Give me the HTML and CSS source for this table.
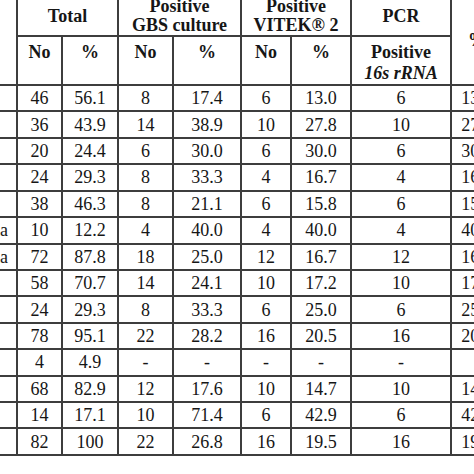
FILE: index.html
```html
<!DOCTYPE html>
<html>
<head>
<meta charset="utf-8">
<link rel="stylesheet" href="styles.css">
</head>
<body>
<table class="tbl">
  <colgroup>
    <col class="c-label">
    <col class="c-tno">
    <col class="c-tpct">
    <col class="c-gno">
    <col class="c-gpct">
    <col class="c-vno">
    <col class="c-vpct">
    <col class="c-pcr">
    <col class="c-ppct">
  </colgroup>
  <thead>
    <tr class="h1">
      <th rowspan="2" class="lab">Variables</th>
      <th colspan="2">Total</th>
      <th colspan="2">Positive<br>GBS culture</th>
      <th colspan="2">Positive<br>VITEK® 2</th>
      <th>PCR</th>
      <th rowspan="2" class="mid">%</th>
    </tr>
    <tr class="h2">
      <th>No</th>
      <th>%</th>
      <th>No</th>
      <th>%</th>
      <th>No</th>
      <th>%</th>
      <th>Positive<br><i>16s rRNA</i></th>
    </tr>
  </thead>
  <tbody>
    <tr><td class="lab">Urban</td><td>46</td><td>56.1</td><td>8</td><td>17.4</td><td>6</td><td>13.0</td><td>6</td><td>13.0</td></tr>
    <tr><td class="lab">Rural</td><td>36</td><td>43.9</td><td>14</td><td>38.9</td><td>10</td><td>27.8</td><td>10</td><td>27.8</td></tr>
    <tr><td class="lab">&lt; 25 y</td><td>20</td><td>24.4</td><td>6</td><td>30.0</td><td>6</td><td>30.0</td><td>6</td><td>30.0</td></tr>
    <tr><td class="lab">25–30 y</td><td>24</td><td>29.3</td><td>8</td><td>33.3</td><td>4</td><td>16.7</td><td>4</td><td>16.7</td></tr>
    <tr><td class="lab">&gt; 30 y</td><td>38</td><td>46.3</td><td>8</td><td>21.1</td><td>6</td><td>15.8</td><td>6</td><td>15.8</td></tr>
    <tr><td class="lab">Primigravida</td><td>10</td><td>12.2</td><td>4</td><td>40.0</td><td>4</td><td>40.0</td><td>4</td><td>40.0</td></tr>
    <tr><td class="lab">Multigravida</td><td>72</td><td>87.8</td><td>18</td><td>25.0</td><td>12</td><td>16.7</td><td>12</td><td>16.7</td></tr>
    <tr><td class="lab">Yes</td><td>58</td><td>70.7</td><td>14</td><td>24.1</td><td>10</td><td>17.2</td><td>10</td><td>17.2</td></tr>
    <tr><td class="lab">No</td><td>24</td><td>29.3</td><td>8</td><td>33.3</td><td>6</td><td>25.0</td><td>6</td><td>25.0</td></tr>
    <tr><td class="lab">Yes</td><td>78</td><td>95.1</td><td>22</td><td>28.2</td><td>16</td><td>20.5</td><td>16</td><td>20.5</td></tr>
    <tr><td class="lab">No</td><td>4</td><td>4.9</td><td>-</td><td>-</td><td>-</td><td>-</td><td>-</td><td>-</td></tr>
    <tr><td class="lab">Yes</td><td>68</td><td>82.9</td><td>12</td><td>17.6</td><td>10</td><td>14.7</td><td>10</td><td>14.7</td></tr>
    <tr><td class="lab">No</td><td>14</td><td>17.1</td><td>10</td><td>71.4</td><td>6</td><td>42.9</td><td>6</td><td>42.9</td></tr>
    <tr><td class="lab">Total</td><td>82</td><td>100</td><td>22</td><td>26.8</td><td>16</td><td>19.5</td><td>16</td><td>19.5</td></tr>
  </tbody>
</table>
</body>
</html>
```

FILE: styles.css
```css
html, body {
  margin: 0;
  padding: 0;
  background: #ffffff;
  overflow: hidden;
  width: 474px;
  height: 474px;
}

.tbl {
  border-collapse: collapse;
  table-layout: fixed;
  width: 595px;
  margin-left: -93px;
  margin-top: -5px;
  font-family: "Liberation Serif", serif;
  font-size: 18px;
  color: #161616;
}

.c-label { width: 109px; }
.c-tno { width: 45px; }
.c-tpct { width: 56px; }
.c-gno { width: 55px; }
.c-gpct { width: 68px; }
.c-vno { width: 50px; }
.c-vpct { width: 60px; }
.c-pcr { width: 100px; }
.c-ppct { width: 52px; }

.tbl th,
.tbl td {
  border: 2px solid #3d3d3d;
  padding: 0;
  text-align: center;
  white-space: nowrap;
  overflow: hidden;
}

.tbl th {
  font-weight: bold;
  line-height: 21px;
}

.h1 th {
  height: 38px;
  line-height: 19px;
  vertical-align: middle;
}

.h2 th {
  height: 31px;
  vertical-align: top;
  padding-top: 5px;
}

.tbl th.mid {
  vertical-align: middle;
}

.tbl td {
  height: 24.43px;
  line-height: 20px;
  vertical-align: middle;
}

.tbl .lab {
  text-align: left;
  padding-left: 5px;
}
```
